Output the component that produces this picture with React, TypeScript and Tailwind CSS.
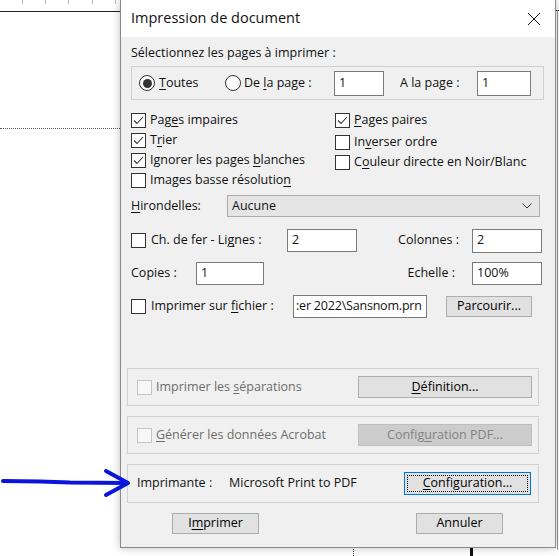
import type { ReactNode } from 'react';

const font = { fontFamily: '"Open Sans", "Noto Sans", sans-serif' };

function U({ children }: { children: ReactNode }) {
  return <span className="underline underline-offset-2 decoration-1">{children}</span>;
}

function Check({ checked = false, disabled = false }: { checked?: boolean; disabled?: boolean }) {
  return (
    <span
      className={`flex h-[15px] w-[15px] shrink-0 items-center justify-center border ${
        disabled ? 'border-[#c4c4c4] bg-[#f7f7f7]' : 'border-[#333] bg-white'
      }`}
    >
      {checked && (
        <svg width="13" height="13" viewBox="0 0 13 13">
          <path d="M2 6.5 L5 9.5 L11 3" fill="none" stroke="#333" strokeWidth="1.1" />
        </svg>
      )}
    </span>
  );
}

function Radio({ on = false }: { on?: boolean }) {
  return (
    <span className="flex h-[16px] w-[16px] shrink-0 items-center justify-center rounded-full border border-[#333] bg-white">
      {on && <span className="h-[9px] w-[9px] rounded-full bg-[#333]" />}
    </span>
  );
}

function Field({ value, className }: { value: string; className: string }) {
  return (
    <div className={`flex shrink-0 items-center overflow-hidden border border-[#7a7a7a] bg-white pl-[4px] ${className}`}>
      <span className="whitespace-nowrap">{value}</span>
    </div>
  );
}

function Btn({ children, className, focus = false, disabled = false }: { children: ReactNode; className: string; focus?: boolean; disabled?: boolean }) {
  return (
    <button
      className={`flex shrink-0 items-center justify-center border ${
        disabled
          ? 'border-[#bfbfbf] bg-[#cccccc] text-[#838383]'
          : focus
          ? 'border-[#0078d7] bg-[#e1e1e1] text-black'
          : 'border-[#adadad] bg-[#e1e1e1] text-black'
      } ${className}`}
    >
      {focus ? (
        <span className="flex h-[calc(100%-4px)] w-[calc(100%-4px)] items-center justify-center border border-dotted border-black">
          {children}
        </span>
      ) : (
        children
      )}
    </button>
  );
}

function CheckRow({ checked, label, className = '' }: { checked?: boolean; label: ReactNode; className?: string }) {
  return (
    <div className={`flex h-[20px] items-center gap-[4px] ${className}`}>
      <Check checked={checked} />
      <span className="whitespace-nowrap">{label}</span>
    </div>
  );
}

export default function App() {
  return (
    <div className="relative h-[556px] w-[559px] overflow-hidden bg-white text-[12.5px] leading-none text-[#111]" style={font}>
      {/* document behind the dialog */}
      <div className="absolute left-0 top-[11px] h-px w-[120px] bg-[#222]" />
      {[22, 45, 68, 92, 115].map((x) => (
        <div key={x} className="absolute top-0 h-[4px] w-px bg-[#bbb]" style={{ left: x }} />
      ))}
      <div className="absolute left-0 top-[128px] w-[120px] border-t border-dotted border-[#555]" />
      <div className="absolute left-[556px] top-[10px] h-px w-[3px] bg-[#222]" />
      <div className="absolute left-[557px] top-[10px] h-[540px] w-px bg-[#999]" />
      <div className="absolute left-[470px] top-[547px] h-[9px] w-[3px] bg-[#111]" />
      <div className="absolute left-[353px] top-[549px] h-[7px] border-l border-dotted border-[#444]" />

      {/* dialog */}
      <div className="absolute left-[120px] top-0 flex h-[548px] w-[436px] flex-col border-x border-b border-[#8a8a8a] bg-[#f0f0f0] shadow-[0_0_8px_rgba(0,0,0,0.25)]">
        <div className="flex h-[37px] shrink-0 items-center justify-between bg-white pl-[10px] pr-[14px]">
          <span className="text-[14.5px]">Impression de document</span>
          <svg width="14" height="14" viewBox="0 0 14 14">
            <path d="M1 1 L13 13 M13 1 L1 13" stroke="#111" strokeWidth="1" />
          </svg>
        </div>

        <div className="flex flex-col pl-[10px] pr-[11px]">
          <div className="mt-[7px] flex h-[18px] items-center">Sélectionnez les pages à imprimer :</div>

          <div className="mt-[4px] flex h-[34px] items-center border border-[#d0d0d0] pl-[7px]">
            <div className="flex w-[86px] items-center gap-[4px]">
              <Radio on />
              <span>
                <U>T</U>outes
              </span>
            </div>
            <div className="flex w-[109px] items-center gap-[3px]">
              <Radio />
              <span>
                De <U>l</U>a page :
              </span>
            </div>
            <Field value="1" className="h-[25px] w-[50px]" />
            <span className="ml-[16px] w-[77px]">A la page :</span>
            <Field value="1" className="h-[25px] w-[54px]" />
          </div>

          <div className="mt-[10px] flex">
            <div className="flex w-[204px] flex-col">
              <CheckRow checked label={<>Pag<U>e</U>s impaires</>} />
              <CheckRow checked label={<>T<U>r</U>ier</>} />
              <CheckRow checked label={<>Ignorer les pages <U>b</U>lanches</>} />
              <CheckRow label={<>Images basse résolutio<U>n</U></>} />
            </div>
            <div className="flex flex-col">
              <CheckRow checked label={<><U>P</U>ages paires</>} />
              <CheckRow className="mt-[2px]" label={<>In<U>v</U>erser ordre</>} />
              <CheckRow label={<>C<U>o</U>uleur directe en Noir/Blanc</>} />
            </div>
          </div>

          <div className="mt-[5px] flex h-[22px] items-center">
            <span className="w-[96px]">
              <U>H</U>irondelles:
            </span>
            <div className="flex h-[22px] w-[313px] items-center justify-between border border-[#acacac] bg-[#e5e5e5] pl-[4px] pr-[7px]">
              <span>Aucune</span>
              <svg width="10" height="6" viewBox="0 0 10 6">
                <path d="M0.5 0.5 L5 5 L9.5 0.5" fill="none" stroke="#333" strokeWidth="1" />
              </svg>
            </div>
          </div>

          <div className="mt-[12px] flex h-[23px] items-center">
            <div className="flex w-[156px] items-center gap-[5px]">
              <Check />
              <span>
                Ch. de fer - Li<U>g</U>nes :
              </span>
            </div>
            <Field value="2" className="h-[23px] w-[70px]" />
            <span className="flex-1 pr-[13px] text-right">Colonnes :</span>
            <Field value="2" className="mr-[2px] h-[24px] w-[70px]" />
          </div>

          <div className="mt-[10px] flex h-[23px] items-center">
            <span className="w-[65px]">Copies :</span>
            <Field value="1" className="h-[23px] w-[68px]" />
            <span className="flex-1 pr-[17px] text-right">Echelle :</span>
            <Field value="100%" className="mr-[2px] h-[23px] w-[70px]" />
          </div>

          <div className="mt-[10px] flex h-[23px] items-center">
            <div className="flex w-[162px] items-center gap-[5px]">
              <Check />
              <span>
                Imprimer sur <U>f</U>ichier :
              </span>
            </div>
            <div className="flex h-[23px] w-[134px] shrink-0 items-center overflow-hidden border border-[#7a7a7a] bg-white pl-[2px]">
              <span className="whitespace-nowrap tracking-[-0.2px]">:er 2022\Sansnom.prn</span>
            </div>
            <Btn className="ml-[19px] h-[21px] w-[86px]">Parcourir...</Btn>
          </div>

          <div className="-ml-[4px] mt-[50px] flex h-[38px] w-[412px] items-center border border-[#d0d0d0] pl-[9px] text-[#6d6d6d]">
            <Check disabled />
            <span className="ml-[4px] w-[202px]">
              Imprimer les <U>s</U>éparations
            </span>
            <Btn className="h-[22px] w-[174px]">
              <span>
                <U>D</U>éfinition...
              </span>
            </Btn>
          </div>

          <div className="-ml-[4px] mt-[10px] flex h-[38px] w-[412px] items-center border border-[#d0d0d0] pl-[9px] text-[#6d6d6d]">
            <Check disabled />
            <span className="ml-[4px] w-[202px]">
              <U>G</U>énérer les données Acrobat
            </span>
            <Btn disabled className="h-[22px] w-[174px]">
              <span>
                Config<U>u</U>ration PDF...
              </span>
            </Btn>
          </div>

          <div className="-ml-[4px] mt-[10px] flex h-[39px] w-[412px] items-center border border-[#d0d0d0] pl-[9px]">
            <span className="w-[92px]">Imprimante :</span>
            <span className="w-[175px]">Microsoft Print to PDF</span>
            <Btn focus className="h-[23px] w-[127px]">
              <span>
                <U>C</U>onfiguration...
              </span>
            </Btn>
          </div>

          <div className="mt-[10px] flex h-[21px] items-center">
            <Btn className="ml-[41px] h-[21px] w-[87px]">
              <span>
                I<U>m</U>primer
              </span>
            </Btn>
            <Btn className="ml-[157px] h-[21px] w-[87px]">Annuler</Btn>
          </div>
        </div>
      </div>

      {/* blue hand-drawn arrow */}
      <svg className="absolute left-0 top-[466px]" width="134" height="34" viewBox="0 0 134 34">
        <path d="M3 15 L40 15.5 L70 16.5 L127 17" fill="none" stroke="#0a14dc" strokeWidth="4" strokeLinecap="round" />
        <path d="M106 5 L128 17 L106 29" fill="none" stroke="#0a14dc" strokeWidth="4" strokeLinecap="round" strokeLinejoin="round" />
      </svg>
    </div>
  );
}
